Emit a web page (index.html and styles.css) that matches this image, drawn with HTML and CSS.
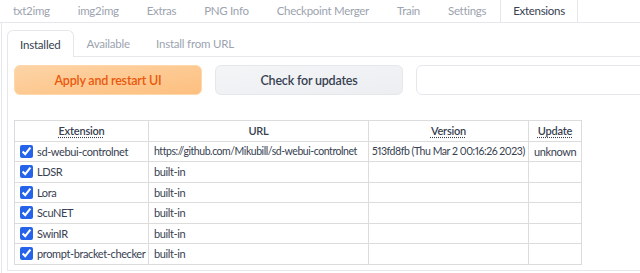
FILE: index.html
```html
<!DOCTYPE html>
<html lang="en">
<head>
    <meta charset="UTF-8">
    <meta name="viewport" content="width=device-width, initial-scale=1.0">
    <title>Stable Diffusion - Extensions</title>
<link rel="stylesheet" href="styles.css">
</head>
<body>
    <div class="tabs-nav">
        <button class="tab">txt2img</button>
        <button class="tab">img2img</button>
        <button class="tab">Extras</button>
        <button class="tab">PNG Info</button>
        <button class="tab">Checkpoint Merger</button>
        <button class="tab">Train</button>
        <button class="tab">Settings</button>
        <button class="tab selected">Extensions</button>
    </div>
    <div class="tab-panel">
        <div class="sub-nav">
            <button class="sub-tab selected">Installed</button>
            <button class="sub-tab">Available</button>
            <button class="sub-tab">Install from URL</button>
        </div>
        <div class="sub-panel">
            <div class="actions">
                <button class="btn primary">Apply and restart UI</button>
                <button class="btn secondary">Check for updates</button>
                <input class="textbox" type="text">
            </div>
            <table class="ext-table">
                <thead>
                    <tr>
                        <th class="col-name"><abbr title="Use checkbox to enable the extension">Extension</abbr></th>
                        <th class="col-url">URL</th>
                        <th class="col-version"><abbr title="Extension version">Version</abbr></th>
                        <th class="col-update"><abbr title="Use checkbox to mark the extension for update">Update</abbr></th>
                    </tr>
                </thead>
                <tbody>
                    <tr>
                        <td><label><input type="checkbox" checked>sd-webui-controlnet</label></td>
                        <td class="url">https://github.com/Mikubill/sd-webui-controlnet</td>
                        <td class="version">513fd8fb (Thu Mar 2 00:16:26 2023)</td>
                        <td>unknown</td>
                    </tr>
                    <tr>
                        <td><label><input type="checkbox" checked>LDSR</label></td>
                        <td>built-in</td>
                        <td></td>
                        <td></td>
                    </tr>
                    <tr>
                        <td><label><input type="checkbox" checked>Lora</label></td>
                        <td>built-in</td>
                        <td></td>
                        <td></td>
                    </tr>
                    <tr>
                        <td><label><input type="checkbox" checked>ScuNET</label></td>
                        <td>built-in</td>
                        <td></td>
                        <td></td>
                    </tr>
                    <tr>
                        <td><label><input type="checkbox" checked>SwinIR</label></td>
                        <td>built-in</td>
                        <td></td>
                        <td></td>
                    </tr>
                    <tr>
                        <td><label><input type="checkbox" checked>prompt-bracket-checker</label></td>
                        <td>built-in</td>
                        <td></td>
                        <td></td>
                    </tr>
                </tbody>
            </table>
        </div>
    </div>
</body>
</html>
```

FILE: styles.css
```css
body {
    margin: 0;
    width: 700px;
    overflow: hidden;
    font-family: Lato, "Open Sans", sans-serif;
    color: #374151;
    background: #fff;
}

button {
    font-family: inherit;
    cursor: pointer;
}

.tabs-nav {
    display: flex;
    height: 22px;
    padding-left: 0;
    border-bottom: 1px solid #e5e7eb;
}

.tab {
    background: none;
    border: 1px solid transparent;
    border-top: 0;
    padding: 0 13px;
    font-size: 11.5px;
    letter-spacing: -0.3px;
    color: #9ca3af;
    height: 23px;
    line-height: 22px;
}

.tab:first-child {
    padding-left: 12px;
}

.tab.selected {
    background: #fff;
    color: #374151;
    border-color: #e5e7eb;
    padding: 0 12px;
}

.tab-panel {
    margin-left: 1px;
    padding: 7px 5px 6px 5px;
    border: 1px solid #e5e7eb;
    border-top: 0;
}

.sub-nav {
    display: flex;
    border-bottom: 1px solid #e5e7eb;
}

.sub-tab {
    background: none;
    border: 1px solid transparent;
    border-bottom: 0;
    border-radius: 6px 6px 0 0;
    padding: 0 12px;
    height: 26px;
    font-size: 11.5px;
    letter-spacing: -0.2px;
    color: #9ca3af;
    margin-bottom: -1px;
}

.sub-tab.selected {
    background: #fff;
    color: #374151;
    border-color: #e5e7eb;
    height: 27px;
}

.sub-panel {
    border: 1px solid #e5e7eb;
    border-top: 0;
    padding: 8px 6px 5px 6px;
}

.actions {
    display: flex;
    gap: 13px;
    height: 30px;
}

.btn {
    width: 188px;
    border-radius: 6px;
    font-size: 12.5px;
    letter-spacing: -0.2px;
    font-weight: 600;
}

.btn.primary {
    background: linear-gradient(to bottom right, #fdd4a6, #fdbf7f);
    border: 1px solid #fed7aa;
    color: #ea580c;
}

.btn.secondary {
    background: linear-gradient(to bottom right, #f4f5f7, #eceef1);
    border: 1px solid #e5e7eb;
    color: #374151;
}

.textbox {
    flex: 1;
    border: 1px solid #e5e7eb;
    border-radius: 6px;
    background: #fff;
}

.ext-table {
    margin-top: 25px;
    border-collapse: collapse;
    font-size: 11px;
    letter-spacing: -0.38px;
    font-variant-numeric: proportional-nums;
    table-layout: fixed;
    width: 568px;
}

.ext-table th,
.ext-table td {
    border: 1px solid #dcdcdc;
    padding: 2px 5px;
    height: 15.5px;
    line-height: 15.5px;
    white-space: nowrap;
    overflow: hidden;
}

.ext-table th {
    font-weight: 600;
    text-align: center;
    letter-spacing: -0.2px;
}

.ext-table td.url {
    padding: 2px 2px 2px 5px;
    font-size: 10.5px;
    letter-spacing: -0.45px;
}

.ext-table td.version {
    padding: 2px 3px;
    font-size: 10.5px;
    letter-spacing: -0.45px;
}

.ext-table abbr {
    text-decoration: underline dotted;
    text-underline-offset: 2px;
}

.col-name { width: 123px; }
.col-url { width: 209px; }
.col-version { width: 149px; }
.col-update { width: 42px; }

.ext-table label {
    display: flex;
    align-items: center;
    gap: 4px;
}

.ext-table input[type="checkbox"] {
    margin: 0;
    width: 13px;
    height: 13px;
    accent-color: #2563eb;
}
```
